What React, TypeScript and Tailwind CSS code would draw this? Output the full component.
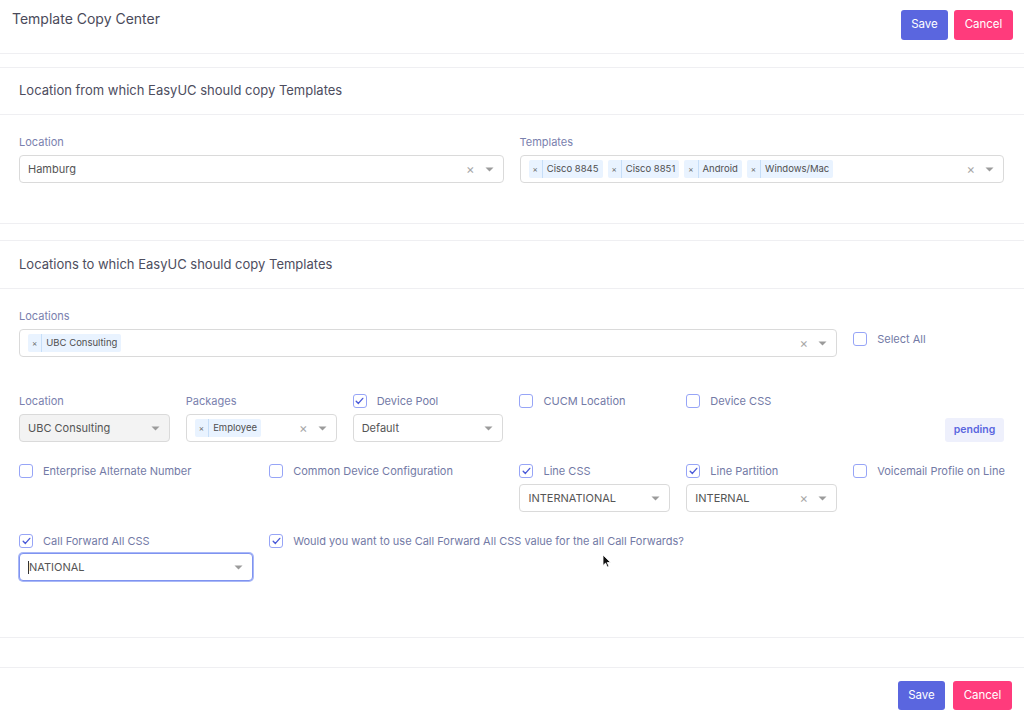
import React from 'react'

const CB_ON = true

function Caret() {
  return (
    <svg width="9" height="5" viewBox="0 0 9 5" className="shrink-0">
      <path d="M0.5 0.5h8l-4 4z" fill="#9b9b9b" />
    </svg>
  )
}

function Clear() {
  return <span className="text-[13px] leading-none text-[#a8a8a8] mr-[10px]">×</span>
}

function Chip({ label }: { label: string }) {
  return (
    <span className="inline-flex items-stretch h-[18px] rounded-[2px] bg-[#e9f3ff] text-[9.5px] text-[#4f4f4f]">
      <span className="px-[4px] flex items-center text-[8px] text-[#666] border-r border-[#c6def8]">×</span>
      <span className="px-[4px] flex items-center">{label}</span>
    </span>
  )
}

function Select(props: { value?: string; chips?: string[]; clear?: boolean; disabled?: boolean; focus?: boolean }) {
  const { value, chips, clear, disabled, focus } = props
  return (
    <div
      className={
        'h-[28px] rounded-[4px] border flex items-center pl-2 pr-[9px] text-[11px] text-[#555] ' +
        (focus ? 'border-[#7f93f0] shadow-[0_0_0_1px_#a9b8f7] ' : 'border-[#dadada] ') +
        (disabled ? 'bg-[#f3f3f3]' : 'bg-white')
      }
    >
      <div className="flex-1 flex items-center gap-[5px] min-w-0">
        {focus && <span className="w-px h-[13px] bg-[#333] -mr-[5px]" />}
        {chips ? chips.map((c) => <Chip key={c} label={c} />) : <span>{value}</span>}
      </div>
      {clear && <Clear />}
      <Caret />
    </div>
  )
}

function Check({ on }: { on?: boolean }) {
  return (
    <span className="w-[14px] h-[14px] rounded-[3px] border border-[#97a5f7] bg-white flex items-center justify-center shrink-0">
      {on && (
        <svg width="9" height="8" viewBox="0 0 9 8">
          <path d="M1.2 4.2l2.2 2.2 4.4-5" fill="none" stroke="#4b5bd8" strokeWidth="1.4" strokeLinecap="round" strokeLinejoin="round" />
        </svg>
      )}
    </span>
  )
}

function CheckLabel({ label, on }: { label: string; on?: boolean }) {
  return (
    <div className="h-[14px] flex items-center gap-[10px] text-[11px] text-[#737aa6] whitespace-nowrap">
      <Check on={on} />
      <span>{label}</span>
    </div>
  )
}

function Label({ children }: { children: React.ReactNode }) {
  return <div className="h-[14px] flex items-center text-[11px] text-[#7a81ae] mb-[6px]">{children}</div>
}

export default function App() {
  return (
    <div className="relative min-h-[715px] bg-white font-['Inter',sans-serif]">
      <header className="h-[54px] flex items-start justify-between pl-3 pr-[11px] pt-[10px] border-b border-[#efeff2]">
        <h1 className="text-[14px] leading-[18px] text-[#4a4a5a]">Template Copy Center</h1>
        <div className="flex items-center gap-[6px] text-[11.5px] text-white">
          <button className="h-[30px] w-[47px] rounded-[3px] bg-[#5a66df]">Save</button>
          <button className="h-[30px] w-[59px] rounded-[3px] bg-[#ff3b7c]">Cancel</button>
        </div>
      </header>

      <section className="mt-[13px] border-t border-b border-[#efeff2]">
        <div className="h-[47px] px-[19px] flex items-center border-b border-[#efeff2] text-[13px] text-[#4d4d5e]">
          Location from which EasyUC should copy Templates
        </div>
        <div className="grid grid-cols-2 gap-x-4 pl-[19px] pr-[20px] pt-[20px] pb-[40px]">
          <div>
            <Label>Location</Label>
            <Select value="Hamburg" clear />
          </div>
          <div>
            <Label>Templates</Label>
            <Select chips={['Cisco 8845', 'Cisco 8851', 'Android', 'Windows/Mac']} clear />
          </div>
        </div>
      </section>

      <section className="mt-[16px] border-t border-b border-[#efeff2]">
        <div className="h-[48px] px-[19px] flex items-center border-b border-[#efeff2] text-[13px] text-[#4d4d5e]">
          Locations to which EasyUC should copy Templates
        </div>
        <div className="grid grid-cols-12 gap-x-4 pl-[19px] pr-[20px] pt-[20px] pb-[56px]">
          <div className="col-span-10">
            <Label>Locations</Label>
            <Select chips={['UBC Consulting']} clear />
          </div>
          <div className="col-span-2 pt-[23px]">
            <CheckLabel label="Select All" />
          </div>

          <div className="col-span-2 mt-[37px]">
            <Label>Location</Label>
            <Select value="UBC Consulting" disabled />
          </div>
          <div className="col-span-2 mt-[37px]">
            <Label>Packages</Label>
            <Select chips={['Employee']} clear />
          </div>
          <div className="col-span-2 mt-[37px]">
            <div className="mb-[6px]"><CheckLabel label="Device Pool" on={CB_ON} /></div>
            <Select value="Default" />
          </div>
          <div className="col-span-2 mt-[37px]">
            <CheckLabel label="CUCM Location" />
          </div>
          <div className="col-span-2 mt-[37px]">
            <CheckLabel label="Device CSS" />
          </div>
          <div className="col-span-2 mt-[37px] flex items-end justify-end">
            <span className="h-[24px] w-[59px] rounded-[3px] bg-[#eef0fc] text-[#5a66df] text-[10.5px] font-semibold flex items-center justify-center">pending</span>
          </div>

          <div className="col-span-3 mt-[22px]">
            <CheckLabel label="Enterprise Alternate Number" />
          </div>
          <div className="col-span-3 mt-[22px]">
            <CheckLabel label="Common Device Configuration" />
          </div>
          <div className="col-span-2 mt-[22px]">
            <div className="mb-[6px]"><CheckLabel label="Line CSS" on /></div>
            <Select value="INTERNATIONAL" />
          </div>
          <div className="col-span-2 mt-[22px]">
            <div className="mb-[6px]"><CheckLabel label="Line Partition" on /></div>
            <Select value="INTERNAL" clear />
          </div>
          <div className="col-span-2 mt-[22px]">
            <CheckLabel label="Voicemail Profile on Line" />
          </div>

          <div className="col-span-3 mt-[22px]">
            <div className="mb-[5px]"><CheckLabel label="Call Forward All CSS" on /></div>
            <Select value="NATIONAL" focus />
          </div>
          <div className="col-span-9 mt-[22px]">
            <CheckLabel label="Would you want to use Call Forward All CSS value for the all Call Forwards?" on />
          </div>
        </div>
      </section>

      <footer className="mt-[29px] border-t border-[#efeff2] flex justify-end pr-[12px] pt-[13px] pb-[5px]">
        <div className="flex items-center gap-[8px] text-[11.5px] text-white">
          <button className="h-[29px] w-[47px] rounded-[3px] bg-[#5a66df]">Save</button>
          <button className="h-[29px] w-[59px] rounded-[3px] bg-[#ff3b7c]">Cancel</button>
        </div>
      </footer>

      <svg className="absolute left-[602px] top-[554px]" width="10" height="14" viewBox="0 0 10 14">
        <path d="M1 1v10.5l2.6-2.4 1.8 4 1.6-.7-1.8-3.9h3.4z" fill="#111" stroke="#fff" strokeWidth="0.8" />
      </svg>
    </div>
  )
}
